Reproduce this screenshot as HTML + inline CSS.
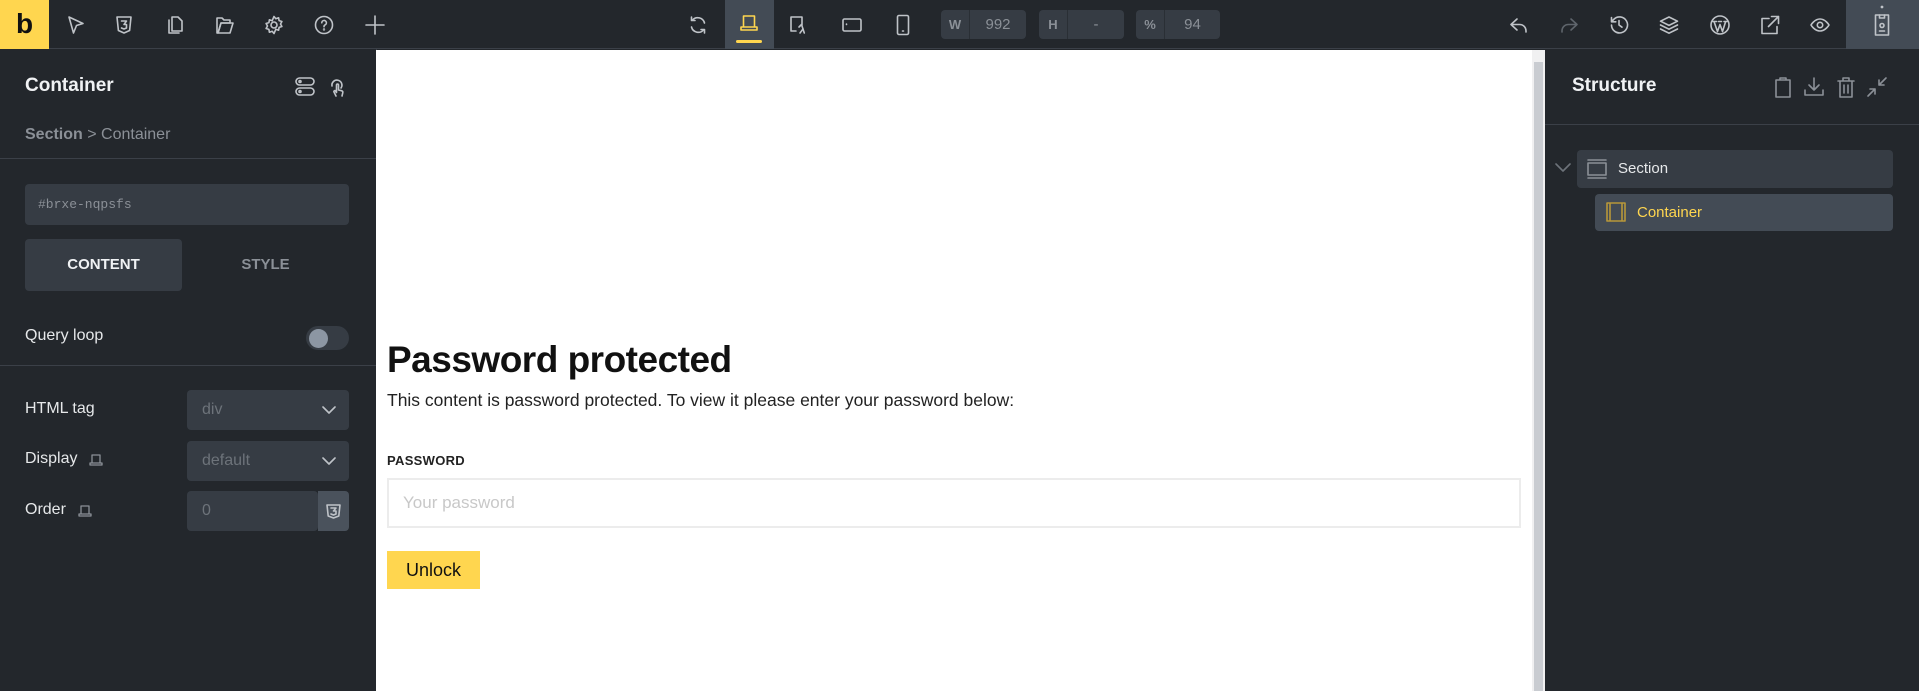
<!DOCTYPE html>
<html><head><meta charset="utf-8"><style>
*{box-sizing:border-box;margin:0;padding:0}
body{width:1919px;height:691px;overflow:hidden;background:#23272c;font-family:"Liberation Sans",sans-serif;position:relative}
.a{position:absolute}
svg{position:absolute;fill:none;stroke:#bfc3c8;stroke-width:1.6;stroke-linecap:round;stroke-linejoin:round}
.top{left:0;top:0;width:1919px;height:49px;background:#23272c;border-bottom:1px solid #3b4048}
.box{background:#363c44;border-radius:4px;height:29px;top:10px;color:#8b9097;font-size:15px}
.box b{position:absolute;left:0;top:0;width:29px;height:29px;line-height:29px;text-align:center;border-right:1px solid #2a2f35;font-size:13px;color:#8b9097}
.box span{position:absolute;left:29px;right:0;top:0;line-height:29px;text-align:center}
.lbl{color:#e6e8ea;font-size:16px}
.sel{background:#363c44;border-radius:4px;left:187px;width:162px;height:40px;color:#6d737a;font-size:16px;line-height:40px;padding-left:15px}
</style></head><body>
<div class="a top"></div>
<div class="a" style="left:0;top:0;width:49px;height:49px;background:#ffd64f;color:#111;font-weight:bold;font-size:28px;line-height:47px;text-align:center">b</div>
<svg style="left:64px;top:14px" width="22" height="22"><path d="M5 3l14 6.5-6.5 2-3 7.5z"/></svg>
<svg style="left:113px;top:14px" width="22" height="22"><path d="M4 3h14l-1.4 13.5L11 19l-5.6-2.5z"/><path d="M8.5 7h5l-2.5 3.5h2.5V14L11 15l-2.5-1"/></svg>
<svg style="left:164px;top:14px" width="22" height="22"><path d="M8 3h6l4 4v10H8z"/><path d="M5 6v13h10"/></svg>
<svg style="left:213px;top:14px" width="22" height="22"><path d="M4 4h5l2 2h6v3H8l-3 10H4z"/><path d="M5 19l3-10h12l-3 10z"/></svg>
<svg style="left:263px;top:14px" width="22" height="22"><circle cx="11" cy="11" r="3"/><path d="M11 2.5l1.8 2.2 2.8-.9.5 2.8 2.8.9-1.4 2.5 1.4 2.5-2.8.9-.5 2.8-2.8-.9L11 19.5l-1.8-2.2-2.8.9-.5-2.8-2.8-.9L4.5 12 3.1 9.5l2.8-.9.5-2.8 2.8.9z"/></svg>
<svg style="left:313px;top:14px" width="22" height="22"><circle cx="11" cy="11" r="8.5"/><path d="M8.8 8.8a2.3 2.3 0 1 1 3.2 2.1c-.7.4-1 .9-1 1.8"/><circle cx="11" cy="15.5" r=".4"/></svg>
<svg style="left:364px;top:14px" width="22" height="22"><path d="M11 2v18M2 11h18"/></svg>
<svg style="left:687px;top:14px" width="22" height="22"><path d="M17.5 9a7 7 0 0 0-12-3M4.5 13a7 7 0 0 0 12 3"/><path d="M4.5 3v3.5H8M17.5 19v-3.5H14"/></svg>
<div class="a" style="left:725px;top:0;width:49px;height:49px;background:#434b55"></div>
<svg style="left:738px;top:13px;stroke:#ffd64f" width="22" height="22"><path d="M5.5 3h11v11h-11zM3 14h16v3H3z"/></svg>
<div class="a" style="left:736px;top:40px;width:26px;height:3px;background:#ffd64f;border-radius:2px"></div>
<svg style="left:787px;top:14px" width="22" height="22"><path d="M15 11V3H4v14h5"/><path d="M12 13l2.5-2.5 1 3 1.8 5.5"/><path d="M13 19l3-4"/></svg>
<svg style="left:841px;top:14px" width="22" height="22"><rect x="2" y="5" width="18" height="12" rx="1.5"/><path d="M5.5 10v.5"/></svg>
<svg style="left:892px;top:14px" width="22" height="22"><rect x="5.5" y="1.5" width="11" height="19" rx="1.5"/><path d="M10.5 17h1"/></svg>
<div class="a box" style="left:941px;width:85px"><b>W</b><span>992</span></div>
<div class="a box" style="left:1039px;width:85px"><b>H</b><span>-</span></div>
<div class="a box" style="left:1136px;width:84px"><b>%</b><span>94</span></div>
<svg style="left:1508px;top:14px" width="22" height="22"><path d="M9 5L3 10.5 9 16M3 10.5h8.5c4 0 6.5 3 6.5 6.5v1"/></svg>
<svg style="left:1558px;top:14px;stroke:#5f656c" width="22" height="22"><path d="M13 5l6 5.5-6 5.5M19 10.5h-8.5c-4 0-6.5 3-6.5 6.5v1"/></svg>
<svg style="left:1608px;top:14px" width="22" height="22"><path d="M3.5 11a8 8 0 1 0 2.3-5.7L3.5 7.8M3.5 3.5v4.3h4.3"/><path d="M11 6.5v4.5l3 2.2"/></svg>
<svg style="left:1658px;top:14px" width="22" height="22"><path d="M11 3l8.5 4.2L11 11.4 2.5 7.2z"/><path d="M2.5 11L11 15.2 19.5 11M2.5 15L11 19.2 19.5 15"/></svg>
<svg style="left:1709px;top:14px" width="22" height="22"><circle cx="11" cy="11" r="9"/><path d="M5 7.5l3.5 10 2.5-7 2.5 7 3-9.5M4 7.5h3.5M9.5 7.5h3M15 7.5h3"/></svg>
<svg style="left:1759px;top:14px" width="22" height="22"><path d="M10 4.5H3v15h15v-7"/><path d="M12.5 2.5h7v7M19.5 2.5l-10 10"/></svg>
<svg style="left:1809px;top:14px" width="22" height="22"><path d="M2 11s3.5-6 9-6 9 6 9 6-3.5 6-9 6-9-6-9-6z"/><circle cx="11" cy="11" r="2.7"/></svg>
<div class="a" style="left:1846px;top:0;width:73px;height:49px;background:#434b55"></div>
<svg style="left:1871px;top:4px" width="22" height="42"><circle cx="11" cy="3" r="1.4" style="fill:#bfc3c8;stroke:none"/><path d="M4.5 11h13v20h-13z"/><path d="M8.5 11v3h5v-3"/><circle cx="11" cy="21.5" r="2"/><path d="M8.5 27h5"/></svg>

<div class="a" style="left:376px;top:49px;width:1px;height:642px;background:#3b4048"></div>
<div class="a" style="left:25px;top:75px;color:#f0f2f4;font-size:19px;font-weight:bold">Container</div>
<svg style="left:294px;top:76px" width="22" height="22"><rect x="2" y="2" width="18" height="7" rx="3.5"/><rect x="2" y="12" width="18" height="7" rx="3.5"/><circle cx="6" cy="5.5" r="1"/><circle cx="6" cy="15.5" r="1"/></svg>
<svg style="left:326px;top:76px" width="22" height="22"><path d="M6 10a5 5 0 1 1 9 2"/><path d="M10 20l-2-4c-.5-1 1-2 1.5-1l1 1.5V9a1 1 0 0 1 2 0v5l3 .7c1 .3 1.5 1 1.3 2L16 20"/></svg>
<div class="a" style="left:25px;top:126px;font-size:16px;color:#8b9097"><b style="color:#8b9097">Section</b> &gt; Container</div>
<div class="a" style="left:0;top:158px;width:376px;height:1px;background:#3b4048"></div>
<div class="a" style="left:25px;top:184px;width:324px;height:41px;background:#363c44;border-radius:4px;color:#8b9097;font-family:'Liberation Mono',monospace;font-size:13px;line-height:41px;padding-left:13px">#brxe-nqpsfs</div>
<div class="a" style="left:25px;top:239px;width:157px;height:52px;background:#363c44;border-radius:4px;color:#f0f2f4;font-weight:bold;font-size:15px;line-height:52px;text-align:center">CONTENT</div>
<div class="a" style="left:182px;top:239px;width:167px;height:52px;color:#8b9097;font-weight:bold;font-size:15px;line-height:52px;text-align:center">STYLE</div>
<div class="a lbl" style="left:25px;top:327px">Query loop</div>
<div class="a" style="left:306px;top:326px;width:43px;height:24px;border-radius:12px;background:#363c44"></div>
<div class="a" style="left:309px;top:329px;width:19px;height:19px;border-radius:50%;background:#8c96a3"></div>
<div class="a" style="left:0;top:365px;width:376px;height:1px;background:#3b4048"></div>
<div class="a lbl" style="left:25px;top:400px">HTML tag</div>
<div class="a sel" style="top:390px">div</div>
<div class="a lbl" style="left:25px;top:450px">Display</div>
<div class="a sel" style="top:441px">default</div>
<div class="a lbl" style="left:25px;top:501px">Order</div>
<div class="a sel" style="top:491px;width:131px">0</div>
<div class="a" style="left:318px;top:491px;width:31px;height:40px;background:#4a525c;border-radius:0 4px 4px 0"></div>
<svg style="left:325px;top:503px" width="17" height="17"><path d="M2 2h13l-1.2 11L8.5 15l-5.3-2z"/><path d="M6 5h5l-2.5 3h2.5v3L8.5 12 6 11"/></svg>
<svg style="left:322px;top:404px" width="14" height="12"><path d="M1 3l6 6 6-6"/></svg>
<svg style="left:322px;top:455px" width="14" height="12"><path d="M1 3l6 6 6-6"/></svg>
<svg style="left:89px;top:453px;stroke:#8b9097;stroke-width:1.3" width="14" height="14"><path d="M3 2h8v8H3zM1 10h12v2H1z"/></svg>
<svg style="left:78px;top:504px;stroke:#8b9097;stroke-width:1.3" width="14" height="14"><path d="M3 2h8v8H3zM1 10h12v2H1z"/></svg>

<div class="a" style="left:376px;top:50px;width:1156px;height:641px;background:#fff"></div>
<div class="a" style="left:1532px;top:50px;width:13px;height:641px;background:#f0f0f1"></div>
<div class="a" style="left:1534px;top:62px;width:9px;height:629px;background:#c9ccd1"></div>
<div class="a" style="left:387px;top:339px;font-size:37px;font-weight:bold;color:#111;letter-spacing:-0.5px">Password protected</div>
<div class="a" style="left:387px;top:390px;font-size:17.5px;color:#222">This content is password protected. To view it please enter your password below:</div>
<div class="a" style="left:387px;top:453px;font-size:13px;font-weight:bold;color:#222;letter-spacing:0.3px">PASSWORD</div>
<div class="a" style="left:387px;top:478px;width:1134px;height:50px;border:2px solid #ececec;color:#c8c8c8;font-size:17px;line-height:46px;padding-left:14px">Your password</div>
<div class="a" style="left:387px;top:551px;width:93px;height:38px;background:#ffd64f;color:#111;font-size:18px;line-height:38px;text-align:center">Unlock</div>

<div class="a" style="left:1572px;top:75px;color:#f0f2f4;font-size:19px;font-weight:bold">Structure</div>
<svg style="left:1772px;top:76px;stroke:#8b9097" width="22" height="22"><path d="M4 4h14v17H4zM8 4V2h6v2"/></svg>
<svg style="left:1803px;top:76px;stroke:#8b9097" width="22" height="22"><path d="M11 2v12M6 9l5 5 5-5M2 14v5h18v-5"/></svg>
<svg style="left:1835px;top:76px;stroke:#8b9097" width="22" height="22"><path d="M3 5h16M8 5V2h6v3M5 5v16h12V5M9 9v8M13 9v8"/></svg>
<svg style="left:1866px;top:76px;stroke:#8b9097" width="22" height="22"><path d="M20 2l-7 7M13 4v5h5M2 20l7-7M4 13h5v5"/></svg>
<div class="a" style="left:1545px;top:124px;width:374px;height:1px;background:#3b4048"></div>
<svg style="left:1555px;top:160px;stroke:#6d737a" width="16" height="16"><path d="M1 4l7 7 7-7"/></svg>
<div class="a" style="left:1577px;top:150px;width:316px;height:38px;background:#363c44;border-radius:4px"></div>
<svg style="left:1587px;top:159px;stroke:#8b9097" width="20" height="20"><path d="M1 1h18M1 19h18M1 4h18v12H1z"/></svg>
<div class="a" style="left:1618px;top:160px;color:#e6e8ea;font-size:15px">Section</div>
<div class="a" style="left:1595px;top:194px;width:298px;height:37px;background:#434b55;border-radius:4px"></div>
<svg style="left:1606px;top:202px;stroke:#b8973a" width="20" height="20"><path d="M1 1h18v18H1zM4 1v18M16 1v18"/></svg>
<div class="a" style="left:1637px;top:204px;color:#ffd64f;font-size:15px">Container</div>
</body></html>
